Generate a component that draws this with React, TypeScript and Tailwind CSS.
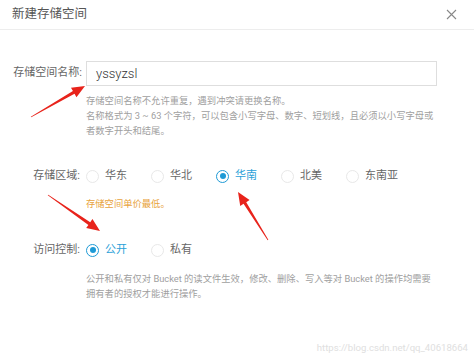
import React from 'react';

const font = { fontFamily: '"Roboto", "Noto Sans CJK SC", sans-serif' };

type Pt = [number, number];

// red annotation arrow, tail -> tip
function arrowPoints(tail: Pt, tip: Pt) {
  const [x1, y1] = tail;
  const [x2, y2] = tip;
  const len = Math.hypot(x2 - x1, y2 - y1);
  const ux = (x2 - x1) / len;
  const uy = (y2 - y1) / len;
  const nx = -uy;
  const ny = ux;
  const head = 13;
  const hw = 5.5;
  const sw = 1.6;
  const bx = x2 - ux * head;
  const by = y2 - uy * head;
  const pts: Pt[] = [
    [x1 + nx * 0.4, y1 + ny * 0.4],
    [bx + nx * sw, by + ny * sw],
    [bx + nx * hw, by + ny * hw],
    [x2, y2],
    [bx - nx * hw, by - ny * hw],
    [bx - nx * sw, by - ny * sw],
    [x1 - nx * 0.4, y1 - ny * 0.4],
  ];
  return pts.map((p) => p.join(',')).join(' ');
}

function Radio({ label, checked }: { label: string; checked?: boolean }) {
  return (
    <div className="flex items-center w-[65px] shrink-0">
      <span
        className={
          checked
            ? 'w-[13px] h-[13px] rounded-full border border-[#1e9ad6] flex items-center justify-center'
            : 'w-[13px] h-[13px] rounded-full border border-[#e8e8e8]'
        }
      >
        {checked && <span className="w-[6px] h-[6px] rounded-full bg-[#1e9ad6]" />}
      </span>
      <span className={checked ? 'ml-[6px] text-[11px] text-[#2a9fd8]' : 'ml-[6px] text-[11px] text-[#666]'}>
        {label}
      </span>
    </div>
  );
}

export default function App() {
  return (
    <div className="relative w-[474px] h-[361px] bg-white overflow-hidden" style={font}>
      {/* header */}
      <div className="h-[30px] border-b border-[#ededed] flex items-center justify-between pl-[12px] pr-[17px]">
        <span className="text-[12.5px] text-[#555]">新建存储空间</span>
        <svg width="11" height="11" viewBox="0 0 11 11">
          <path d="M1 1 L10 10 M10 1 L1 10" stroke="#888" strokeWidth="1.1" />
        </svg>
      </div>

      {/* name */}
      <div className="flex items-center mt-[31px] h-[25px]">
        <span className="w-[86px] pr-[4px] text-right text-[11px] text-[#666]">存储空间名称:</span>
        <div className="w-[351px] h-[25px] border border-[#dedede] flex items-center pl-[9px] text-[13px] font-light text-[#333]">
          yssyzsl
        </div>
      </div>
      <div className="ml-[86px] mt-[7px] text-[9.3px] leading-[15px] text-[#a0a0a0]">
        存储空间名称不允许重复，遇到冲突请更换名称。
        <br />
        名称格式为 3 ~ 63 个字符，可以包含小写字母、数字、短划线，且必须以小写字母或
        <br />
        者数字开头和结尾。
      </div>

      {/* region */}
      <div className="flex items-center mt-[30px] h-[16px]">
        <span className="w-[86px] pr-[6px] text-right text-[11px] text-[#666]">存储区域:</span>
        <Radio label="华东" />
        <Radio label="华北" />
        <Radio label="华南" checked />
        <Radio label="北美" />
        <Radio label="东南亚" />
      </div>
      <div className="ml-[86px] mt-[12px] text-[9.3px] leading-[15px] text-[#e8a33d]">存储空间单价最低。</div>

      {/* access */}
      <div className="flex items-center mt-[31px] h-[16px]">
        <span className="w-[86px] pr-[6px] text-right text-[11px] text-[#666]">访问控制:</span>
        <Radio label="公开" checked />
        <Radio label="私有" />
      </div>
      <div className="ml-[86px] mt-[13px] text-[9.3px] leading-[15px] text-[#a0a0a0]">
        公开和私有仅对 Bucket 的读文件生效，修改、删除、写入等对 Bucket 的操作均需要
        <br />
        拥有者的授权才能进行操作。
      </div>

      <div className="absolute right-[6px] bottom-[6px] text-[9.6px] text-[#e0e0e0]">
        https://blog.csdn.net/qq_40618664
      </div>

      <svg className="absolute inset-0 pointer-events-none" width="474" height="361">
        <polygon points={arrowPoints([31, 117], [85, 86])} fill="#e8231b" />
        <polygon points={arrowPoints([48, 195], [100, 231])} fill="#e8231b" />
        <polygon points={arrowPoints([268, 240], [238, 192])} fill="#e8231b" />
      </svg>
    </div>
  );
}
